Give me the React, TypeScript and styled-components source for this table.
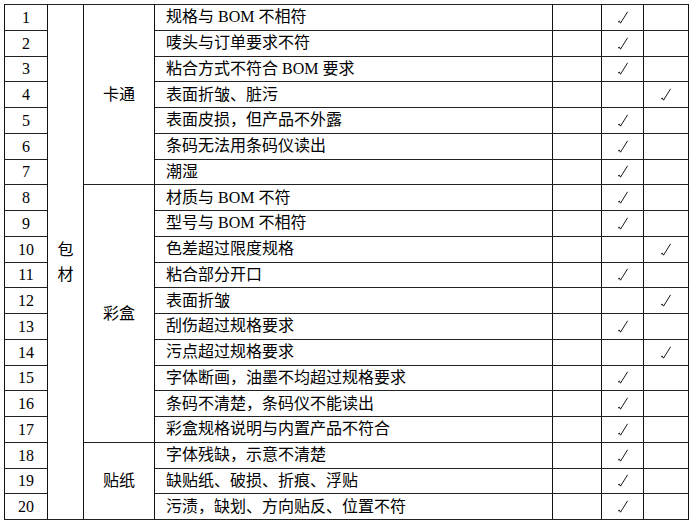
import styled, { createGlobalStyle } from 'styled-components';

const GlobalStyle = createGlobalStyle`
  html, body {
    margin: 0;
    padding: 0;
    background: #ffffff;
  }
  body {
    font-family: "Liberation Serif", "Noto Sans CJK SC", serif;
    color: #000;
  }
`;

const Page = styled.div`
  padding: 4px 6px 0 4px;
`;

const Sheet = styled.table`
  border-collapse: collapse;
  table-layout: fixed;
  width: 684px;
  font-size: 16px;
  line-height: 1;
  border: 1px solid #111;
`;

const Col = styled.col<{ $w: number }>`
  width: ${p => p.$w}px;
`;

const Row = styled.tr`
  height: 25.75px;
`;

const Cell = styled.td<{ $align?: 'left' | 'center' }>`
  border-left: 1px solid #111;
  border-right: 1px solid #111;
  border-top: 1px solid #222;
  border-bottom: 1px solid #222;
  padding: 0 ${p => (p.$align === 'left' ? '11px' : '0')};
  text-align: ${p => p.$align || 'center'};
  vertical-align: middle;
  white-space: nowrap;
  overflow: hidden;
`;

const NumCell = styled(Cell)`
  padding-top: 1px;
`;

const GroupCell = styled(Cell)`
  line-height: 25px;
`;

const Mark = styled.svg`
  display: block;
  margin: 0 auto;
`;

// hand-written "√" tick as in the scanned form
function Check() {
  return (
    <Mark width="12" height="13" viewBox="0 0 12 13">
      <path d="M1 11.2 L2.3 10 L3.5 12.2 L10.6 0.8" fill="none" stroke="#000" strokeWidth="0.9" />
    </Mark>
  );
}

type Item = { text: string; col: 6 | 7 };

const widths = [43, 36, 71, 398, 49, 42, 45];

const items: Item[] = [
  { text: '规格与 BOM 不相符', col: 6 },
  { text: '唛头与订单要求不符', col: 6 },
  { text: '粘合方式不符合 BOM 要求', col: 6 },
  { text: '表面折皱、脏污', col: 7 },
  { text: '表面皮损，但产品不外露', col: 6 },
  { text: '条码无法用条码仪读出', col: 6 },
  { text: '潮湿', col: 6 },
  { text: '材质与 BOM 不符', col: 6 },
  { text: '型号与 BOM 不相符', col: 6 },
  { text: '色差超过限度规格', col: 7 },
  { text: '粘合部分开口', col: 6 },
  { text: '表面折皱', col: 7 },
  { text: '刮伤超过规格要求', col: 6 },
  { text: '污点超过规格要求', col: 7 },
  { text: '字体断画，油墨不均超过规格要求', col: 6 },
  { text: '条码不清楚，条码仪不能读出', col: 6 },
  { text: '彩盒规格说明与内置产品不符合', col: 6 },
  { text: '字体残缺，示意不清楚', col: 6 },
  { text: '缺贴纸、破损、折痕、浮贴', col: 6 },
  { text: '污渍，缺划、方向贴反、位置不符', col: 6 },
];

const groups: Record<number, { label: string; span: number }> = {
  0: { label: '卡通', span: 7 },
  7: { label: '彩盒', span: 10 },
  17: { label: '贴纸', span: 3 },
};

export default function App() {
  return (
    <Page>
      <GlobalStyle />
      <Sheet>
        <colgroup>
          {widths.map((w, i) => (
            <Col key={i} $w={w} />
          ))}
        </colgroup>
        <tbody>
          {items.map((item, i) => (
            <Row key={i}>
              <NumCell>{i + 1}</NumCell>
              {i === 0 && (
                <GroupCell rowSpan={items.length}>
                  包<br />材
                </GroupCell>
              )}
              {groups[i] && <Cell rowSpan={groups[i].span}>{groups[i].label}</Cell>}
              <Cell $align="left">{item.text}</Cell>
              <Cell />
              <Cell>{item.col === 6 && <Check />}</Cell>
              <Cell>{item.col === 7 && <Check />}</Cell>
            </Row>
          ))}
        </tbody>
      </Sheet>
    </Page>
  );
}
